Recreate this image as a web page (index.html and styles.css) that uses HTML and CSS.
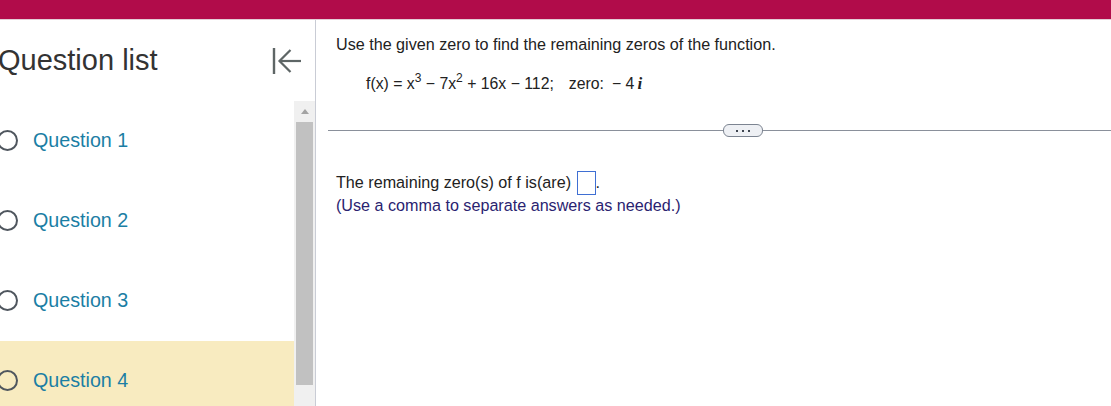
FILE: index.html
```html
<!DOCTYPE html>
<html>
<head>
<meta charset="utf-8">
<link rel="stylesheet" href="styles.css">
</head>
<body>
<div class="topbar"></div>
<div class="main">
  <aside class="sidebar">
    <div class="side-head">
      <h1 class="side-title">Question list</h1>
      <svg class="collapse" width="34" height="30" viewBox="0 0 34 30">
        <path d="M4 2 V28" stroke="#5e6666" stroke-width="2.4" fill="none"/>
        <path d="M9.5 15 H31" stroke="#5e6666" stroke-width="2.2" fill="none"/>
        <path d="M20.5 4 L9.5 15 L20.5 26" stroke="#5e6666" stroke-width="2.2" fill="none"/>
      </svg>
    </div>
    <div class="side-body">
      <ul class="qlist">
        <li class="qrow"><span class="radio"></span><span class="qlabel">Question 1</span></li>
        <li class="qrow"><span class="radio"></span><span class="qlabel">Question 2</span></li>
        <li class="qrow"><span class="radio"></span><span class="qlabel">Question 3</span></li>
        <li class="qrow current"><span class="radio"></span><span class="qlabel">Question 4</span></li>
      </ul>
      <div class="scrollbar">
        <div class="scroll-up"></div>
        <div class="scroll-thumb"></div>
      </div>
    </div>
  </aside>
  <section class="content">
    <p class="prompt">Use the given zero to find the remaining zeros of the function.</p>
    <p class="formula">f(x) = x<sup>3</sup> − 7x<sup>2</sup> + 16x − 112;<span class="gap"></span>zero:<span class="gap2"></span>− 4<i class="imag">i</i></p>
    <div class="divider">
      <span class="line first"></span>
      <span class="pill"><span class="dot"></span><span class="dot"></span><span class="dot"></span></span>
      <span class="line rest"></span>
    </div>
    <p class="answer">The remaining zero(s) of f is(are) <span class="box"></span>.</p>
    <p class="note">(Use a comma to separate answers as needed.)</p>
  </section>
</div>
</body>
</html>
```
FILE: styles.css
```css
html, body {
  margin: 0;
  padding: 0;
  height: 100%;
  overflow: hidden;
  background: #fff;
  font-family: "Liberation Sans", Arial, sans-serif;
}

.topbar {
  height: 19px;
  background: #b10c4a;
  border-bottom: 1px solid #e3cfd6;
}

.main {
  display: flex;
  height: calc(100% - 20px);
}

.sidebar {
  width: 315px;
  flex: none;
  border-right: 1px solid #c9ccd5;
  display: flex;
  flex-direction: column;
}

.side-head {
  height: 81px;
  display: flex;
  align-items: center;
  justify-content: space-between;
  padding-right: 11px;
}

.side-title {
  margin: 0 0 0 -2px;
  font-weight: normal;
  font-size: 29px;
  color: #333;
}

.collapse {
  display: block;
}

.side-body {
  flex: 1;
  display: flex;
  min-height: 0;
}

.qlist {
  list-style: none;
  margin: 0;
  padding: 0;
  width: 294px;
}

.qrow {
  height: 80px;
  display: flex;
  align-items: center;
  padding-bottom: 1px;
  box-sizing: border-box;
}

.qrow.current {
  background: #f8ebc0;
}

.radio {
  width: 17px;
  height: 17px;
  border: 2.5px solid #4f565e;
  border-radius: 50%;
  margin-left: -3px;
  flex: none;
}

.qlabel {
  margin-left: 15px;
  font-size: 19.7px;
  color: #1b7ea4;
}

.scrollbar {
  width: 21px;
  background: #f0f0f0;
  display: flex;
  flex-direction: column;
  align-items: center;
}

.scroll-up {
  margin-top: 8px;
  width: 0;
  height: 0;
  border-left: 4.5px solid transparent;
  border-right: 4.5px solid transparent;
  border-bottom: 5px solid #a3a3a3;
}

.scroll-thumb {
  margin-top: 8px;
  width: 17px;
  height: 263px;
  background: #c1c1c1;
}

.content {
  flex: 1;
  padding-left: 20px;
  color: #222;
  font-size: 16.15px;
}

.content p {
  margin: 0;
  line-height: 20px;
}

.prompt {
  padding-top: 14px;
}

.formula {
  margin-top: 20px !important;
  padding-left: 30px;
  font-size: 15.8px;
}

.formula sup {
  font-size: 12px;
  line-height: 0;
  vertical-align: 7px;
}

.gap {
  display: inline-block;
  width: 15px;
}

.gap2 {
  display: inline-block;
  width: 8px;
}

.imag {
  font-family: "Liberation Serif", "Times New Roman", serif;
  font-size: 17px;
  font-weight: bold;
  margin-left: 3px;
}

.divider {
  margin-top: 30px;
  margin-left: -8px;
  display: flex;
  align-items: center;
  height: 13px;
}

.line {
  height: 1px;
  background: #8a909b;
}

.line.first {
  width: 395px;
}

.line.rest {
  flex: 1;
}

.pill {
  width: 38px;
  height: 11px;
  border: 1px solid #7c8491;
  border-radius: 6px;
  background: #eef0f4;
  display: flex;
  align-items: center;
  justify-content: center;
  gap: 4px;
}

.dot {
  width: 2px;
  height: 2px;
  background: #3e4550;
}

.answer {
  margin-top: 33px !important;
  line-height: 24px !important;
}

.box {
  display: inline-block;
  width: 17px;
  height: 22px;
  border: 1px solid #3f6fd3;
  vertical-align: -7px;
  margin-left: 1px;
}

.note {
  color: #2a2370;
  line-height: 21px !important;
}
```
